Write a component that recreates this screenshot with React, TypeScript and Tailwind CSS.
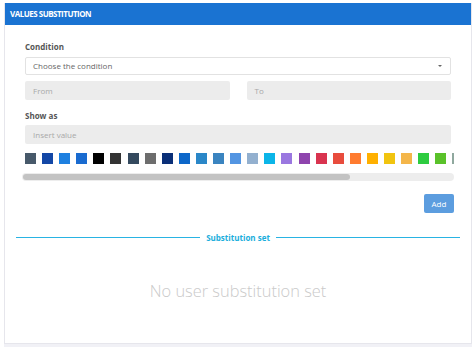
import React from "react";

const swatches = [
  "#47596a", "#1347a6", "#1e80e0", "#196bd0", "#000000", "#333333", "#34495e", "#6d6d6d",
  "#0a2f78", "#0d67c9", "#2a87c8", "#3a84c0", "#5395e2", "#93b0cf", "#0bb5e8", "#9a77e0",
  "#8e44ad", "#d9344f", "#e84c3d", "#ff7b2f", "#ffb000", "#f1c40f", "#f4b64a", "#2ecc40",
  "#5ac22a", "#8fa89e", "#1abc9c", "#16a085", "#27ae60", "#95a5a6", "#7f8c8d", "#bdc3c7",
  "#dfe4e8",
];

const label = "block text-[8px] font-bold leading-[11px] text-[#555]";
const field =
  "flex h-[19px] items-center rounded-[2px] bg-[#ececec] px-[8px] text-[8px] text-[#a8a8a8]";

export default function App() {
  return (
    <div className="flex h-[347px] flex-col bg-white pl-[4px] pr-[2px] pt-[3px] font-['Open_Sans',sans-serif]">
      <div className="border-x border-b border-[#e6e6ec] bg-white">
        <div className="flex h-[22px] items-center bg-[#1a73d2] pl-[5px] text-[8px] font-bold tracking-[-0.5px] text-white">
          VALUES SUBSTITUTION
        </div>

        <div className="flex flex-col px-[20px] pt-[16px]">
          <span className={label}>Condition</span>
          <div className="mt-[5px] flex h-[18px] items-center justify-between rounded-[2px] border border-[#e2e2e2] pl-[7px] pr-[8px] text-[8px] text-[#666]">
            <span>Choose the condition</span>
            <span className="h-0 w-0 border-x-[2.5px] border-t-[2.5px] border-x-transparent border-t-[#666]" />
          </div>
          <div className="mt-[6px] grid grid-cols-2 gap-[17px]">
            <div className={field}>From</div>
            <div className={field}>To</div>
          </div>
          <span className={`${label} mt-[10px]`}>Show as</span>
          <div className={`${field} mt-[4px]`}>Insert value</div>

          {/* colour picker strip with its horizontal scrollbar */}
          <div className="-mx-[3px] mt-[9px] flex flex-col">
            <div className="overflow-hidden">
              <div className="flex w-max gap-[6.1px] px-[3px]">
                {swatches.map((c) => (
                  <span key={c} className="h-[11px] w-[11px] shrink-0" style={{ backgroundColor: c }} />
                ))}
              </div>
            </div>
            <div className="mt-[9px] h-[8px] rounded-full bg-[#ededed] p-[1px]">
              <div className="h-full w-[76%] rounded-full bg-[#c3c3c3]" />
            </div>
          </div>

          <button
            type="button"
            className="-mr-[3px] mt-[13px] flex h-[19px] w-[30px] items-center justify-center self-end rounded-[2px] bg-[#5c9ddf] text-[8px] text-white"
          >
            Add
          </button>
        </div>

        <div className="mt-[19px] flex items-center gap-[5px] px-[11px]">
          <div className="flex-1 border-t border-[#29b3e3]" />
          <span className="px-[1px] text-[8px] font-bold leading-[11px] text-[#1aaedc]">
            Substitution set
          </span>
          <div className="flex-1 border-t border-[#29b3e3]" />
        </div>

        <div className="pb-[41px] pt-[37px] text-center text-[16.4px] font-light leading-[22px] text-[#cacaca]">
          No user substitution set
        </div>
      </div>
      <div className="flex-1 bg-[#f1f1f6]" />
    </div>
  );
}
